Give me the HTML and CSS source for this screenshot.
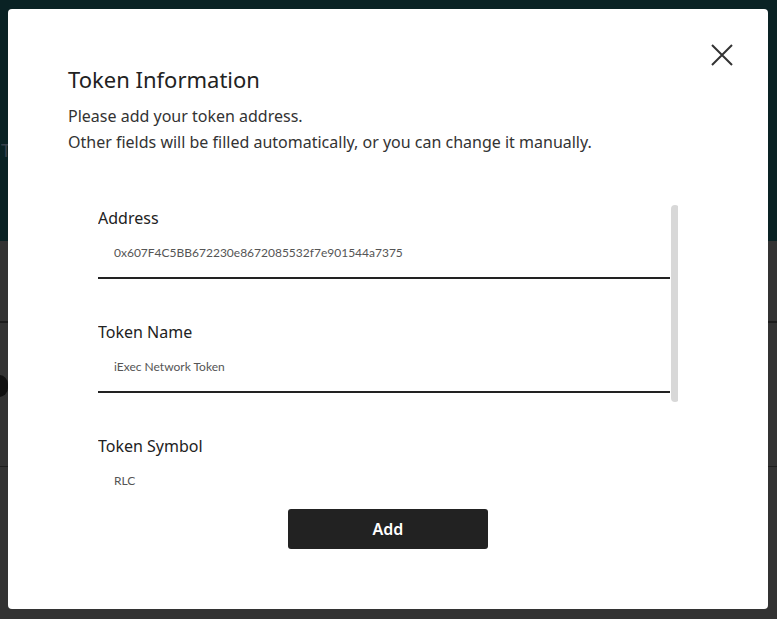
FILE: index.html
```html
<!DOCTYPE html>
<html>
<head>
<meta charset="utf-8">
<link rel="stylesheet" href="styles.css">
</head>
<body>
<div class="page">
  <div class="hero"><span class="hero-text">T</span></div>
  <div class="rest">
    <div class="row row-a"></div>
    <div class="row row-b"><span class="pill"></span></div>
    <div class="row row-c"><span class="ghost">or</span></div>
    <div class="row row-d"></div>
  </div>
</div>
<div class="modal">
  <button class="close" aria-label="Close">
    <svg width="22" height="22" viewBox="0 0 22 22"><path d="M1 1 L21 21 M21 1 L1 21" stroke="#333" stroke-width="2" fill="none"/></svg>
  </button>
  <h1 class="title">Token Information</h1>
  <p class="desc">Please add your token address.<br>Other fields will be filled automatically, or you can change it manually.</p>
  <div class="scroll">
    <div class="fields">
      <div class="field">
        <div class="label">Address</div>
        <div class="value">0x607F4C5BB672230e8672085532f7e901544a7375</div>
      </div>
      <div class="field">
        <div class="label">Token Name</div>
        <div class="value">iExec Network Token</div>
      </div>
      <div class="field">
        <div class="label">Token Symbol</div>
        <div class="value">RLC</div>
      </div>
    </div>
    <div class="thumb"></div>
  </div>
  <div class="actions"><button class="add">Add</button></div>
</div>
</body>
</html>
```
FILE: styles.css
```css
html, body { margin: 0; padding: 0; }
body { width: 777px; height: 619px; overflow: hidden; background: #333; font-family: "Noto Sans", "Open Sans", sans-serif; }
.page { display: flex; flex-direction: column; height: 619px; }
.hero { height: 241px; background: #0a2224; position: relative; }
.hero-text { position: absolute; left: 1px; top: 138px; font-size: 18px; color: #556; opacity: .6; }
.rest { flex: 1; display: flex; flex-direction: column; background: #333; }
.row { border-bottom: 2px solid #1c1c1c; }
.row-a { height: 80px; }
.row-b { height: 143px; border-bottom: 1px solid #1e1e1e; position: relative; }
.pill { position: absolute; left: -10px; top: 52px; width: 18px; height: 22px; border-radius: 11px; background: #111; }
.ghost { position: absolute; right: 0; top: 110px; color: #555; font-size: 16px; }
.row-c { display: none; }
.row-d { border: none; }

.modal {
  position: absolute; left: 8px; top: 9px; width: 760px; height: 600px;
  box-sizing: border-box; background: #fff; border-radius: 4px;
  padding: 55px 60px 60px 60px;
  display: flex; flex-direction: column;
}
.close { position: absolute; left: 703px; top: 35px; width: 22px; height: 22px; padding: 0; border: 0; background: none; }
.close svg { display: block; }
.title { margin: 0; font-size: 22px; line-height: 30px; font-weight: 400; color: #222; }
.desc { margin: 9px 0 0; font-size: 16px; line-height: 26px; color: #333; }
.scroll { position: relative; margin: 50px 0 0 30px; width: 580px; height: 290px; overflow: hidden; }
.fields { width: 572px; display: flex; flex-direction: column; }
.field { padding-top: 2px; margin-bottom: 40px; }
.label { font-size: 16px; line-height: 22px; color: #222; }
.value { margin-top: 16px; padding: 0 16px 16px; border-bottom: 2px solid #222; font-family: Lato, "Noto Sans", sans-serif; font-weight: 400; font-size: 12px; line-height: 16px; color: #555; }
.thumb { position: absolute; left: 573px; top: 0; width: 8px; height: 197px; border-radius: 4px; background: #d8d8d8; }
.actions { display: flex; justify-content: center; margin-top: 14px; }
.add { width: 200px; height: 40px; border: 0; border-radius: 3px; background: #222; color: #fff; font-family: "Noto Sans", sans-serif; font-size: 16px; font-weight: 600; }
```
